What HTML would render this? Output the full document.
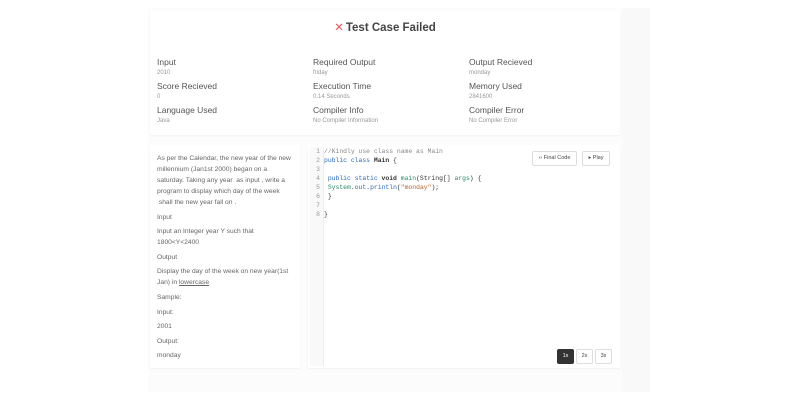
<!DOCTYPE html>
<html><head><style>
body{margin:0;width:800px;height:400px;background:#fff;font-family:"Liberation Sans",sans-serif;position:relative;overflow:hidden}
.bg{position:absolute;left:148px;top:8px;width:474px;height:384px;background:#fcfcfc}
.strip{position:absolute;left:622px;top:8px;width:28px;height:384px;background:#f9f9f9}
.top{position:absolute;left:150px;top:10px;width:470px;height:125px;background:#fff;box-shadow:0 1px 2px rgba(0,0,0,.05)}
h1{position:absolute;left:0;width:470px;top:10px;margin:0;text-align:center;font-size:11.5px;color:#444;font-weight:bold}
h1 span{color:#e55;font-weight:normal;margin-right:2px}
.cell{position:absolute;font-size:8.5px;color:#555}
.cell div{font-size:6px;color:#999;margin-top:3px}
.left{position:absolute;left:150px;top:145px;width:150px;height:223px;background:#fff;box-shadow:0 1px 2px rgba(0,0,0,.05);font-size:6.7px;color:#666;line-height:11px}
.left p{margin:0 0 3.6px 7px;width:140px}
.code{position:absolute;left:308px;top:145px;width:312px;height:223px;background:#fff;box-shadow:0 1px 2px rgba(0,0,0,.05)}
.gut{position:absolute;left:2px;top:2px;width:13px;height:219px;background:#f9f9f9;border-right:1px solid #eee}
pre{position:absolute;left:0;top:2px;margin:0;font-family:"Liberation Mono",monospace;font-size:6.4px;line-height:9px;color:#333}
.n{color:#999;display:inline-block;width:12px;text-align:right;margin-right:4px}
.k{color:#2a6bb5}.s{color:#b5622a}.g{color:#888}.b{font-weight:bold}.gr{color:#2a8a6b}
.btn{position:absolute;border:1px solid #ddd;border-radius:2px;font-size:5.5px;color:#444;height:13px;line-height:13px;text-align:center;background:#fff}
</style></head><body>
<div class="bg"></div><div class="strip"></div>
<div class="top">
<h1><span>✕</span>Test Case Failed</h1>
<div class="cell" style="left:7px;top:47px">Input<div>2010</div></div>
<div class="cell" style="left:163px;top:47px">Required Output<div>friday</div></div>
<div class="cell" style="left:319px;top:47px">Output Recieved<div>monday</div></div>
<div class="cell" style="left:7px;top:71px">Score Recieved<div>0</div></div>
<div class="cell" style="left:163px;top:71px">Execution Time<div>0.14 Seconds</div></div>
<div class="cell" style="left:319px;top:71px">Memory Used<div>2841600</div></div>
<div class="cell" style="left:7px;top:95px">Language Used<div>Java</div></div>
<div class="cell" style="left:163px;top:95px">Compiler Info<div>No Compiler Information</div></div>
<div class="cell" style="left:319px;top:95px">Compiler Error<div>No Compiler Error</div></div>
</div>
<div class="left"><div style="height:8px"></div>
<p>As per the Calendar, the new year of the new<br>millennium (Jan1st 2000) began on a<br>saturday. Taking any year &nbsp;as input , write a<br>program to display which day of the week<br>&nbsp;shall the new year fall on .</p>
<p>Input</p><p>Input an Integer year Y such that<br>1800&lt;Y&lt;2400</p><p>Output</p>
<p>Display the day of the week on new year(1st<br>Jan) in <u>lowercase</u></p>
<p>Sample:</p><p>Input:</p><p>2001</p><p>Output:</p><p>monday</p></div>
<div class="code"><div class="gut"></div>
<pre><span class="n">1</span><span class="g">//Kindly use class name as Main</span>
<span class="n">2</span><span class="k">public class</span> <span class="b">Main</span> {
<span class="n">3</span>
<span class="n">4</span> <span class="k">public static</span> <span class="b">void</span> <span class="gr">main</span>(String[] <span class="gr">args</span>) {
<span class="n">5</span> <span class="gr">System</span>.<span class="k">out</span>.<span class="k">println</span>(<span class="s">"monday"</span>);
<span class="n">6</span> }
<span class="n">7</span>
<span class="n">8</span>}</pre>
<div class="btn" style="left:224px;top:6px;width:43px">‹› Final Code</div>
<div class="btn" style="left:274px;top:6px;width:26px">▸ Play</div>
<div class="btn" style="left:249px;top:204px;width:15px;background:#333;color:#fff;border-color:#333">1x</div>
<div class="btn" style="left:268px;top:204px;width:15px">2x</div>
<div class="btn" style="left:287px;top:204px;width:15px">3x</div>
</div>
</body></html>
